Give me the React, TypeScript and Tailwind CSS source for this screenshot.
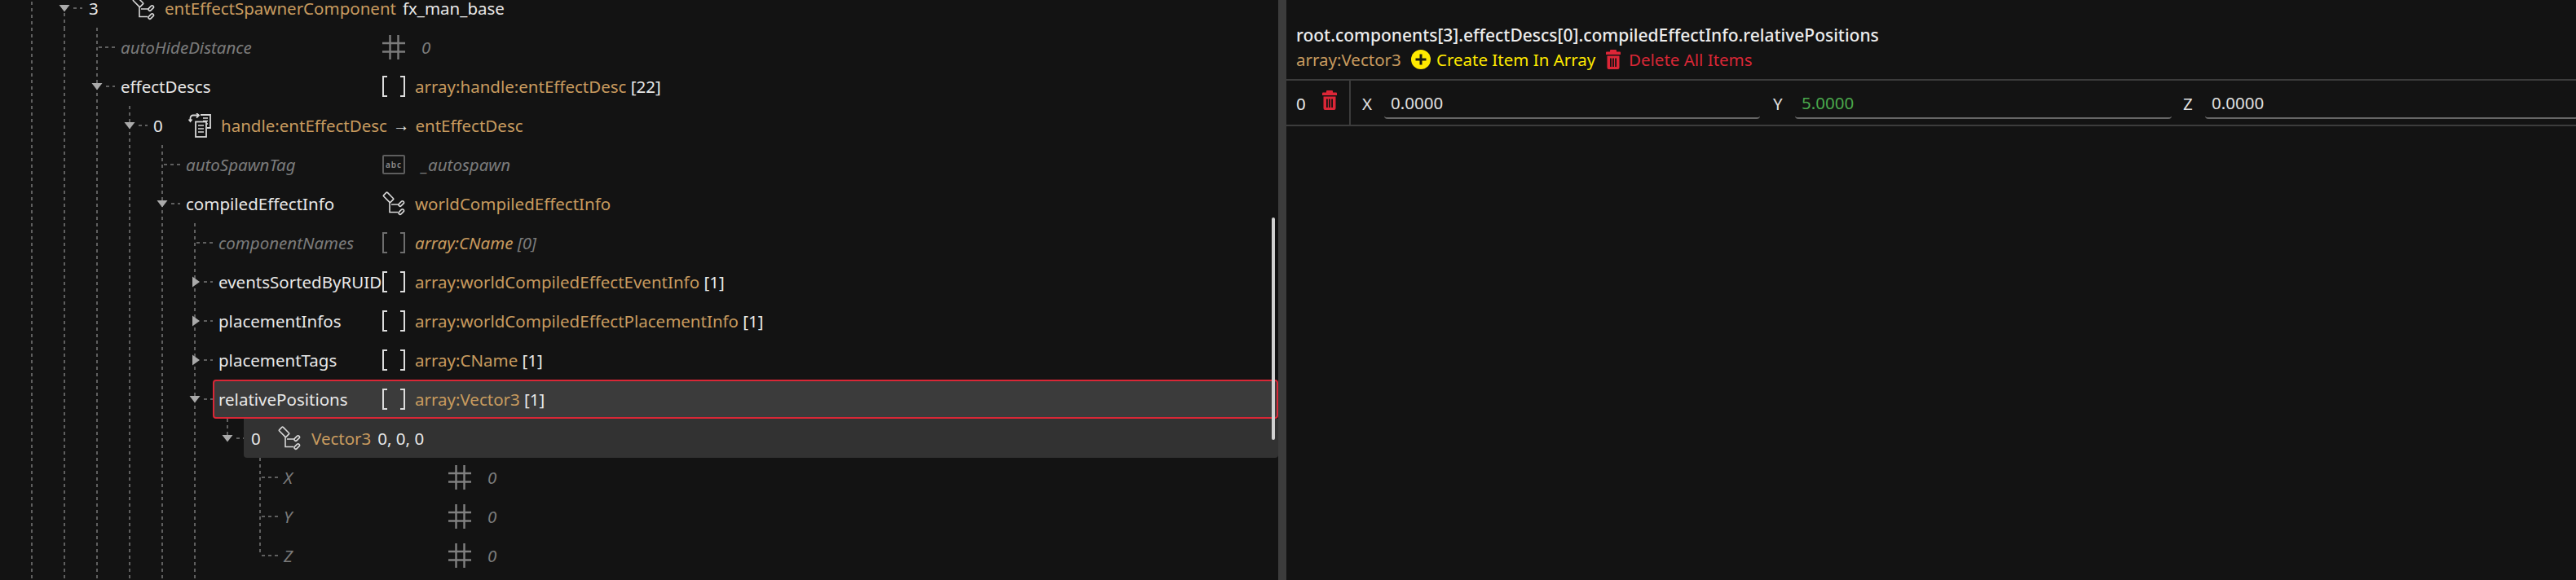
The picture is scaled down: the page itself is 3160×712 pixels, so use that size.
import type { ReactNode } from 'react';

type GuideKind = 'line' | 'tick' | 'end' | 'down' | 'downFirst' | 'downLast' | 'right' | 'blank';

const DASH = { stroke: '#5f5f5f', strokeWidth: 2, strokeDasharray: '4 4' };

function Guide({ kind }: { kind: GuideKind }) {
  const top = kind === 'end' || kind === 'downLast';
  const bottom = kind === 'downFirst';
  return (
    <svg width="40" height="48" className="shrink-0 overflow-visible">
      {kind !== 'blank' && (
        <line x1="20" x2="20" y1={bottom ? 30 : 0} y2={top ? 22 : 48} {...DASH} />
      )}
      {(kind === 'tick' || kind === 'end') && <line x1="22" x2="42" y1="24" y2="24" {...DASH} />}
      {(kind === 'down' || kind === 'downFirst' || kind === 'downLast') && (
        <>
          <path d="M13.500 20h13l-6.500 8.500z" fill="#aaaaaa" />
          <line x1="31" x2="42" y1="24" y2="24" {...DASH} />
        </>
      )}
      {kind === 'right' && (
        <>
          <path d="M17 17.500l9 6.500-9 6.500z" fill="#aaaaaa" />
          <line x1="31" x2="42" y1="24" y2="24" {...DASH} />
        </>
      )}
    </svg>
  );
}

function Guides({ kinds }: { kinds: GuideKind[] }) {
  return (
    <>
      {kinds.map((kind, i) => (
        <Guide key={i} kind={kind} />
      ))}
    </>
  );
}

function StructIcon() {
  return (
    <svg width="28" height="30" viewBox="0 0 28 30" fill="none" stroke="#d8d8d8" strokeWidth="1.600" className="shrink-0">
      <rect x="1.500" y="4" width="12" height="6.500" rx="1" transform="rotate(45 7.500 7.300)" />
      <rect x="19.500" y="13.200" width="7.500" height="3.600" rx="1.800" transform="rotate(-45 23.300 15)" />
      <rect x="19.500" y="23.200" width="7.500" height="3.600" rx="1.800" transform="rotate(-45 23.300 25)" />
      <path d="M9 13v12.500h10M11 16h9" />
    </svg>
  );
}

function HandleIcon() {
  return (
    <svg width="28" height="30" viewBox="0 0 28 30" fill="none" stroke="#d8d8d8" strokeWidth="1.800" className="shrink-0">
      <path d="M13 2.500H6c-2 0-3.500 1.500-3.500 3.500v3" />
      <path d="M10 0l3 2.500-3 3M0.500 7.500l2 2.500 2-2.500" />
      <path d="M15 2h12v16h-4" />
      <path d="M18 6h6M18 9.500h6M18 13h6" strokeWidth="1.400" />
      <rect x="9" y="10.500" width="13" height="18.500" fill="#131313" />
      <path d="M12 15h7M12 19h7M12 23h7" strokeWidth="1.600" />
    </svg>
  );
}

function HashIcon({ className }: { className: string }) {
  return (
    <svg width="28" height="30" viewBox="0 0 28 30" fill="none" stroke="currentColor" strokeWidth="2.400" className={`shrink-0 ${className}`}>
      <path d="M9.500 0v30M19.500 0v30M0 10h28M0 20.500h28" />
    </svg>
  );
}

function BracketIcon({ dim }: { dim?: boolean }) {
  return (
    <svg width="28" height="26" viewBox="0 0 28 26" fill="none" stroke={dim ? '#6e6e6e' : '#dcdcdc'} strokeWidth="2" className="shrink-0">
      <path d="M6 1H1v24H6M22 1h5v24H22" />
    </svg>
  );
}

function AbcIcon() {
  return (
    <span className="flex h-[24px] w-[28px] shrink-0 items-center justify-center rounded-[2px] border-2 border-[#5e5e5e] text-[10px] font-semibold tracking-[1px] text-[#8c8c8c]">
      abc
    </span>
  );
}

function TrashIcon({ className }: { className?: string }) {
  return (
    <svg width="18" height="24" viewBox="0 0 18 24" fill="#dc2637" className={`shrink-0 ${className ?? ''}`}>
      <path fillRule="evenodd" d="M6 0h6a1 1 0 0 1 1 1v1.500h4a1 1 0 0 1 1 1V6H0V3.500a1 1 0 0 1 1-1h4V1a1 1 0 0 1 1-1zM1.500 7.500h15V22a2 2 0 0 1-2 2h-11a2 2 0 0 1-2-2zM5 10.500V21h1.800V10.500zM8.100 10.500V21h1.800V10.500zM11.200 10.500V21H13V10.500z" />
    </svg>
  );
}

function PlusCircle() {
  return (
    <svg width="24" height="24" viewBox="0 0 24 24" className="shrink-0">
      <circle cx="12" cy="12" r="12" fill="#ffe900" />
      <path d="M12 5.500v13M5.500 12h13" stroke="#1a1a10" strokeWidth="3" />
    </svg>
  );
}

function TreeRow({ kinds, children }: { kinds: GuideKind[]; children: ReactNode }) {
  return (
    <div className="flex h-12 items-center whitespace-nowrap pl-[19px]">
      <Guides kinds={kinds} />
      {children}
    </div>
  );
}

const LABEL = 'text-[#e8e8e8]';
const DIM = 'italic text-[#7b7b7b]';
const TYPE = 'text-[#c89b5f]';

// One property row: label column up to the value column at x=469
function PropRow({
  kinds,
  labelWidth,
  label,
  icon,
  type,
  count,
  dim,
  valueDim,
}: {
  kinds: GuideKind[];
  labelWidth: string;
  label: string;
  icon: ReactNode;
  type?: string;
  count?: string;
  dim?: boolean;
  valueDim?: string;
}) {
  return (
    <TreeRow kinds={kinds}>
      <span className={`shrink-0 pl-[9px] ${labelWidth} ${dim ? DIM : LABEL}`}>{label}</span>
      {icon}
      {type && (
        <span className={`ml-[12px] ${TYPE} ${dim ? 'italic' : ''}`}>
          {type} <span className={dim ? 'text-[#7b7b7b]' : LABEL}>{count}</span>
        </span>
      )}
      {valueDim && <span className={`ml-[20px] ${DIM}`}>{valueDim}</span>}
    </TreeRow>
  );
}

function TreePane() {
  return (
    <div className="relative h-full w-[1568px] shrink-0 overflow-hidden">
      <div className="-mt-[14px]">
        <TreeRow kinds={['line', 'downFirst']}>
          <span className={`w-[63px] shrink-0 pl-[10px] ${LABEL}`}>3</span>
          <StructIcon />
          <span className={`ml-[12px] ${TYPE}`}>entEffectSpawnerComponent</span>
          <span className={`ml-[8px] ${LABEL}`}>fx_man_base</span>
        </TreeRow>
        <PropRow kinds={['line', 'line', 'tick']} labelWidth="w-[330px]" label="autoHideDistance" dim icon={<HashIcon className="text-[#7c7c7c]" />} valueDim="0" />
        <PropRow
          kinds={['line', 'line', 'down']}
          labelWidth="w-[330px]"
          label="effectDescs"
          icon={<BracketIcon />}
          type="array:handle:entEffectDesc"
          count="[22]"
        />
        <TreeRow kinds={['line', 'line', 'line', 'down']}>
          <span className={`w-[52px] shrink-0 pl-[9px] ${LABEL}`}>0</span>
          <HandleIcon />
          <span className={`ml-[12px] ${TYPE}`}>handle:entEffectDesc</span>
          <span className={`ml-[7px] font-['Liberation_Sans'] ${LABEL}`}>→</span>
          <span className={`ml-[7px] ${TYPE}`}>entEffectDesc</span>
        </TreeRow>
        <PropRow kinds={['line', 'line', 'line', 'line', 'tick']} labelWidth="w-[250px]" label="autoSpawnTag" dim icon={<AbcIcon />} valueDim="_autospawn" />
        <PropRow
          kinds={['line', 'line', 'line', 'line', 'down']}
          labelWidth="w-[250px]"
          label="compiledEffectInfo"
          icon={<StructIcon />}
          type="worldCompiledEffectInfo"
        />
        <PropRow
          kinds={['line', 'line', 'line', 'line', 'line', 'tick']}
          labelWidth="w-[210px]"
          label="componentNames"
          dim
          icon={<BracketIcon dim />}
          type="array:CName"
          count="[0]"
        />
        <PropRow
          kinds={['line', 'line', 'line', 'line', 'line', 'right']}
          labelWidth="w-[210px]"
          label="eventsSortedByRUID"
          icon={<BracketIcon />}
          type="array:worldCompiledEffectEventInfo"
          count="[1]"
        />
        <PropRow
          kinds={['line', 'line', 'line', 'line', 'line', 'right']}
          labelWidth="w-[210px]"
          label="placementInfos"
          icon={<BracketIcon />}
          type="array:worldCompiledEffectPlacementInfo"
          count="[1]"
        />
        <PropRow
          kinds={['line', 'line', 'line', 'line', 'line', 'right']}
          labelWidth="w-[210px]"
          label="placementTags"
          icon={<BracketIcon />}
          type="array:CName"
          count="[1]"
        />
        <TreeRow kinds={['line', 'line', 'line', 'line', 'line', 'down']}>
          <div className="ml-[2px] flex h-12 flex-1 items-center rounded-[4px] border-2 border-[#d92736] bg-[#3b3b3b]">
            <span className={`w-[206px] shrink-0 pl-[5px] ${LABEL}`}>relativePositions</span>
            <BracketIcon />
            <span className={`ml-[12px] ${TYPE}`}>
              array:Vector3 <span className={LABEL}>[1]</span>
            </span>
          </div>
        </TreeRow>
        <TreeRow kinds={['line', 'line', 'line', 'line', 'line', 'line', 'downLast']}>
          <div className="flex h-12 flex-1 items-center rounded-b-[4px] bg-[#323232]">
            <span className={`w-[42px] shrink-0 pl-[9px] ${LABEL}`}>0</span>
            <StructIcon />
            <span className={`ml-[13px] ${TYPE}`}>Vector3</span>
            <span className={`ml-[8px] ${LABEL}`}>0, 0, 0</span>
          </div>
        </TreeRow>
        {['X', 'Y', 'Z'].map((axis) => (
          <PropRow
            key={axis}
            kinds={['line', 'line', 'line', 'line', 'line', 'line', 'blank', axis === 'Z' ? 'end' : 'tick']}
            labelWidth="w-[211px]"
            label={axis}
            dim
            icon={<HashIcon className="text-[#808080]" />}
            valueDim="0"
          />
        ))}
        <TreeRow kinds={['line', 'line', 'line', 'line', 'line', 'line']}>
          <span />
        </TreeRow>
      </div>
      {/* scrollbar thumb */}
      <div className="absolute top-[267px] left-[1560px] h-[273px] w-[4px] rounded-full bg-[#d0d0d0]" />
    </div>
  );
}

function VectorField({ label, value, green, width }: { label: string; value: string; green?: boolean; width: string }) {
  return (
    <div className="flex h-[38px] items-center">
      <span className="w-[27px] shrink-0 text-[#e0e0e0]">{label}</span>
      <span
        className={`flex h-[38px] items-center rounded-b-[4px] border-b-2 border-[#666666] pl-[8px] ${width} ${
          green ? 'text-[#4aa84c]' : 'text-[#e0e0e0]'
        }`}
      >
        {value}
      </span>
    </div>
  );
}

function DetailPane() {
  return (
    <div className="flex h-full flex-1 flex-col">
      <div className="flex h-[99px] flex-col border-b-2 border-[#3c3c3c] pt-[29px] pl-[12px]">
        <div className="h-[29px] text-[21px] leading-[29px] font-medium text-[#ececec]">
          root.components[3].effectDescs[0].compiledEffectInfo.relativePositions
        </div>
        <div className="flex h-[29px] items-center">
          <span className={`w-[141px] shrink-0 ${TYPE}`}>array:Vector3</span>
          <PlusCircle />
          <span className="ml-[7px] w-[208px] shrink-0 text-[#ffe900]">Create Item In Array</span>
          <TrashIcon />
          <span className="ml-[10px] text-[#d92736]">Delete All Items</span>
        </div>
      </div>
      <div className="flex h-[56px] border-b-2 border-[#3c3c3c]">
        <div className="flex w-[79px] shrink-0 items-start border-r-2 border-[#3c3c3c] pt-[9px] pl-[12px]">
          <span className="flex h-[38px] w-[32px] items-center text-[#e8e8e8]">0</span>
          <TrashIcon className="mt-[3px]" />
        </div>
        <div className="flex flex-1 items-start pt-[9px] pl-[14px]">
          <VectorField label="X" value="0.0000" width="w-[461px]" />
          <div className="ml-[16px]">
            <VectorField label="Y" value="5.0000" green width="w-[462px]" />
          </div>
          <div className="ml-[14px]">
            <VectorField label="Z" value="0.0000" width="w-[457px]" />
          </div>
        </div>
      </div>
    </div>
  );
}

export default function App() {
  return (
    <div className="flex h-[712px] w-[3160px] overflow-hidden bg-[#131313] font-['Noto_Sans',sans-serif] text-[20.5px] leading-[20px]">
      <TreePane />
      <div className="h-full w-[10px] shrink-0 bg-[#3c3c3c]" />
      <DetailPane />
    </div>
  );
}
